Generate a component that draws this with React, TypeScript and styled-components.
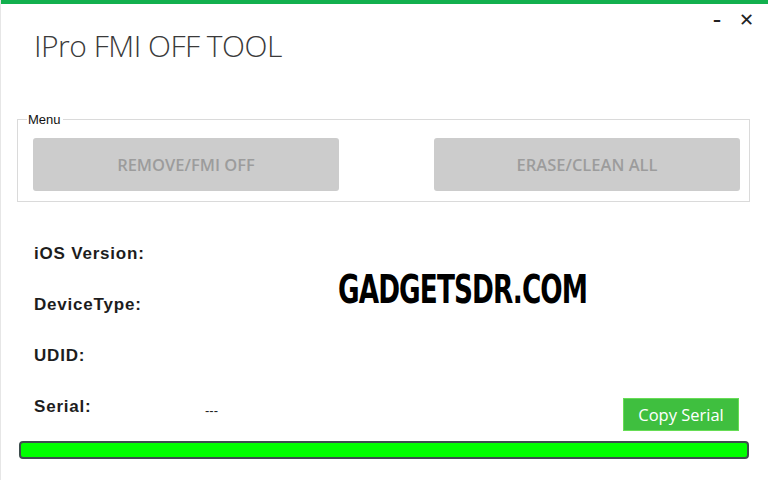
import React from "react";
import styled, { createGlobalStyle } from "styled-components";

const Global = createGlobalStyle`
  html, body { margin: 0; padding: 0; background: #fff; }
  * { box-sizing: border-box; }
`;

const Window = styled.div`
  position: relative;
  width: 768px;
  height: 480px;
  background: #ffffff;
  overflow: hidden;
  font-family: "Liberation Sans", Arial, sans-serif;
  border-left: 1px solid #e6e6e6;
  display: flex;
  flex-direction: column;
`;

const AccentBar = styled.div`
  height: 4px;
  background: #12b04e;
  flex: none;
`;

const Header = styled.div`
  display: flex;
  justify-content: space-between;
  align-items: flex-start;
  height: 108px;
  padding: 0 14px 0 33px;
`;

const Title = styled.h1`
  margin: 24px 0 0;
  font-family: "Open Sans", sans-serif;
  font-weight: 300;
  font-size: 30px;
  line-height: 36px;
  color: #3a3a3a;
  letter-spacing: -0.5px;
`;

const Controls = styled.div`
  display: flex;
  gap: 18px;
  margin-top: 6px;
  align-items: center;
`;

const CtrlBtn = styled.span<{ $size: number }>`
  font-family: "DejaVu Sans", sans-serif;
  font-size: ${(p) => p.$size}px;
  font-weight: bold;
  color: #222;
  line-height: 20px;
`;

const Group = styled.fieldset`
  margin: 0 18px 0 16px;
  padding: 10px 9px 12px 15px;
  border: 1px solid #dadada;
  display: flex;
  justify-content: space-between;
  height: 90px;
`;

const Legend = styled.legend`
  font-family: "Liberation Sans", Arial, sans-serif;
  font-size: 13px;
  color: #111;
  padding: 0 2px 0 1px;
  margin-left: -6px;
`;

const MenuButton = styled.button`
  width: 306px;
  height: 53px;
  border: none;
  border-radius: 3px;
  background: #cccccc;
  color: #9c9c9c;
  font-family: "Open Sans", sans-serif;
  font-weight: 600;
  font-size: 16.5px;
  margin-top: 1px;
`;

const Info = styled.div`
  display: flex;
  flex-direction: column;
  padding: 26px 0 0 33px;
`;

const Row = styled.div`
  display: flex;
  align-items: center;
  height: 51px;
  padding-right: 29px;
`;

const Label = styled.div`
  width: 171px;
  font-weight: bold;
  font-size: 17px;
  letter-spacing: 0.8px;
  color: #1d1d1d;
`;

const Value = styled.div`
  flex: 1;
  font-size: 13px;
  color: #222;
  padding-top: 8px;
`;

const CopyButton = styled.button`
  width: 116px;
  height: 33px;
  margin-top: 15px;
  background: #3fbf3f;
  border: 1px solid #66dd55;
  color: #ffffff;
  font-family: "Open Sans", sans-serif;
  font-size: 16.5px;
  padding: 0;
`;

const Progress = styled.div`
  margin: 9px 19px 0 18px;
  height: 18px;
  border: 2px solid #3d4d4d;
  border-radius: 4px;
  background: #00ff00;
`;

const Watermark = styled.div`
  position: absolute;
  left: 337px;
  top: 267px;
  font-family: "DejaVu Sans Condensed", "DejaVu Sans", sans-serif;
  font-weight: bold;
  font-size: 39px;
  color: #000;
  letter-spacing: -1.2px;
  transform: scaleX(0.75);
  transform-origin: left center;
`;

export default function App() {
  const rows = ["iOS Version:", "DeviceType:", "UDID:"];
  return (
    <Window>
      <Global />
      <AccentBar />
      <Header>
        <Title>IPro FMI OFF TOOL</Title>
        <Controls>
          <CtrlBtn $size={16}>–</CtrlBtn>
          <CtrlBtn $size={18}>✕</CtrlBtn>
        </Controls>
      </Header>
      <Group>
        <Legend>Menu</Legend>
        <MenuButton>REMOVE/FMI OFF</MenuButton>
        <MenuButton>ERASE/CLEAN ALL</MenuButton>
      </Group>
      <Info>
        {rows.map((r) => (
          <Row key={r}>
            <Label>{r}</Label>
            <Value />
          </Row>
        ))}
        <Row>
          <Label>Serial:</Label>
          <Value>---</Value>
          <CopyButton>Copy Serial</CopyButton>
        </Row>
      </Info>
      <Progress />
      <Watermark>GADGETSDR.COM</Watermark>
    </Window>
  );
}
